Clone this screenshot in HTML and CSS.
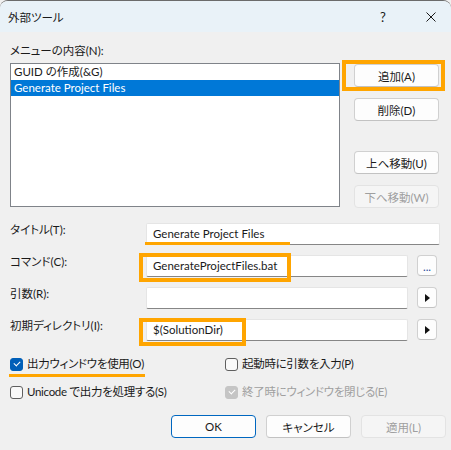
FILE: index.html
```html
<!DOCTYPE html>
<html lang="ja">
    <head>
        <meta charset="utf-8">
        <title>外部ツール</title>
        <link rel="stylesheet" href="styles.css">
    </head>
    <body>
        <div class="dialog">
            <div class="titlebar">
                <span class="caption">外部ツール</span>
                <span class="help">?</span>
                <span class="close">
                    <svg width="10" height="10" viewBox="0 0 10 10"><path d="M0.5 0.5 L9.5 9.5 M9.5 0.5 L0.5 9.5" stroke="#1a1a1a" stroke-width="1" fill="none"/></svg>
                </span>
            </div>
            <div class="content">
                <div class="menu">
                    <div class="menu-list">
                        <div class="caption-label">メニューの内容(N):</div>
                        <div class="listbox">
                            <div class="item">GUID の作成(&amp;G)</div>
                            <div class="item selected">Generate Project Files</div>
                        </div>
                    </div>
                    <div class="menu-buttons">
                        <button class="btn">追加(A)</button>
                        <button class="btn">削除(D)</button>
                        <button class="btn move-up">上へ移動(U)</button>
                        <button class="btn" disabled>下へ移動(W)</button>
                    </div>
                </div>

                <div class="fields">
                    <label>タイトル(T):</label>
                    <div class="input wide">Generate Project Files</div>

                    <label>コマンド(C):</label>
                    <div class="input">GenerateProjectFiles.bat</div>
                    <button class="btn small dots">...</button>

                    <label>引数(R):</label>
                    <div class="input"></div>
                    <button class="btn small"><span class="arrow"></span></button>

                    <label>初期ディレクトリ(I):</label>
                    <div class="input">$(SolutionDir)</div>
                    <button class="btn small"><span class="arrow"></span></button>
                </div>

                <div class="options">
                    <div class="check"><span class="box checked"></span>出力ウィンドウを使用(O)</div>
                    <div class="check"><span class="box"></span>起動時に引数を入力(P)</div>
                    <div class="check"><span class="box"></span>Unicode で出力を処理する(S)</div>
                    <div class="check disabled"><span class="box checked"></span>終了時にウィンドウを閉じる(E)</div>
                </div>

                <div class="actions">
                    <button class="btn default">OK</button>
                    <button class="btn">キャンセル</button>
                    <button class="btn" disabled>適用(L)</button>
                </div>
            </div>

            <!-- highlight marks drawn on top of the dialog -->
            <div class="mark box-mark" style="left: 342px; top: 59px; width: 103px; height: 31px;"></div>
            <div class="mark line-mark" style="left: 145px; top: 241px; width: 145px;"></div>
            <div class="mark box-mark" style="left: 139px; top: 252px; width: 152px; height: 29px;"></div>
            <div class="mark box-mark" style="left: 139px; top: 317px; width: 107px; height: 28px;"></div>
            <div class="mark line-mark" style="left: 9px; top: 373px; width: 136px;"></div>
        </div>
    </body>
</html>
```

FILE: styles.css
```css
html, body {
    margin: 0;
    background-color: #f0f0f0;
}
body {
    font-family: Lato, "Noto Sans CJK JP", sans-serif;
    font-size: 11.5px;
    font-feature-settings: "palt";
    color: #1a1a1a;
}
.dialog {
    position: relative;
    width: 451px;
    height: 450px;
    box-sizing: border-box;
    border-top: 1px solid #6b6b6b;
    border-radius: 8px 8px 0 0;
    overflow: hidden;
}
.titlebar {
    height: 31px;
    background-color: #e9f2f8;
    display: flex;
    align-items: center;
    padding-left: 8px;
}
.caption {
    flex: 1;
}
.help {
    width: 10px;
    margin-right: 36px;
    font-size: 13px;
}
.close {
    display: flex;
    margin-right: 15px;
}
.content {
    padding: 12px 11px 0 10px;
}
.menu {
    display: grid;
    grid-template-columns: 330px 85px;
    column-gap: 14px;
}
.caption-label {
    line-height: 14px;
    margin-bottom: 5px;
}
.listbox {
    height: 144px;
    box-sizing: border-box;
    border: 1px solid #7f8389;
    background-color: #fff;
    padding: 0;
}
.item {
    height: 16px;
    line-height: 16px;
    padding-left: 3px;
}
.item.selected {
    background-color: #0078d7;
    color: #fff;
}
.menu-buttons {
    display: flex;
    flex-direction: column;
    gap: 11px;
    padding-top: 20px;
}
.menu-buttons .move-up {
    margin-top: 19px;
}
.btn {
    height: 23px;
    width: 85px;
    padding: 0;
    font: inherit;
    color: #1a1a1a;
    background-color: #fdfdfd;
    border: 1px solid #d0d0d0;
    border-bottom-color: #c2c2c2;
    border-radius: 4px;
}
.btn:disabled {
    background-color: #f5f5f5;
    border-color: #e3e3e3;
    color: #9f9f9f;
}
.btn.default {
    border-color: #0067c0;
}
.btn.small {
    width: 20px;
    height: 21px;
    margin-left: 9px;
    display: flex;
    align-items: center;
    justify-content: center;
}
.btn.dots {
    color: #1f4e9c;
    line-height: 1;
    padding-top: 2px;
}
.arrow {
    width: 0;
    height: 0;
    border-top: 4px solid transparent;
    border-bottom: 4px solid transparent;
    border-left: 5px solid #111;
}
.fields {
    display: grid;
    grid-template-columns: 136px 262px 32px;
    row-gap: 10px;
    margin-top: 15px;
}
.fields label {
    line-height: 14px;
}
.input {
    height: 22px;
    box-sizing: border-box;
    line-height: 20px;
    padding-left: 6px;
    background-color: #fff;
    border: 1px solid #e5e5e5;
    border-bottom-color: #868686;
    border-radius: 2px;
}
.input.wide {
    grid-column: 2 / 4;
}
.options {
    display: grid;
    grid-template-columns: 215px 1fr;
    row-gap: 14px;
    margin-top: 16px;
}
.check {
    display: flex;
    align-items: center;
    gap: 4px;
    height: 14px;
    line-height: 14px;
    letter-spacing: -0.3px;
}
.check.disabled {
    color: #9f9f9f;
}
.box {
    width: 13px;
    height: 13px;
    box-sizing: border-box;
    border: 1px solid #5f5f5f;
    border-radius: 3px;
    background-color: #f9f9f9;
    position: relative;
}
.box.checked {
    background-color: #005fb8;
    border-color: #005fb8;
}
.box.checked::after {
    content: "";
    position: absolute;
    left: 3px;
    top: 2px;
    width: 5px;
    height: 3px;
    border-left: 1px solid #fff;
    border-bottom: 1px solid #fff;
    transform: rotate(-45deg);
}
.check.disabled .box.checked {
    background-color: #c5c5c5;
    border-color: #c5c5c5;
}
.actions {
    display: flex;
    justify-content: flex-end;
    gap: 10px;
    margin-top: 16px;
    margin-right: -6px;
}
.mark {
    position: absolute;
    box-sizing: border-box;
    pointer-events: none;
}
.box-mark {
    border: 4px solid #ffa500;
}
.line-mark {
    height: 3px;
    background-color: #ffa500;
}
```
